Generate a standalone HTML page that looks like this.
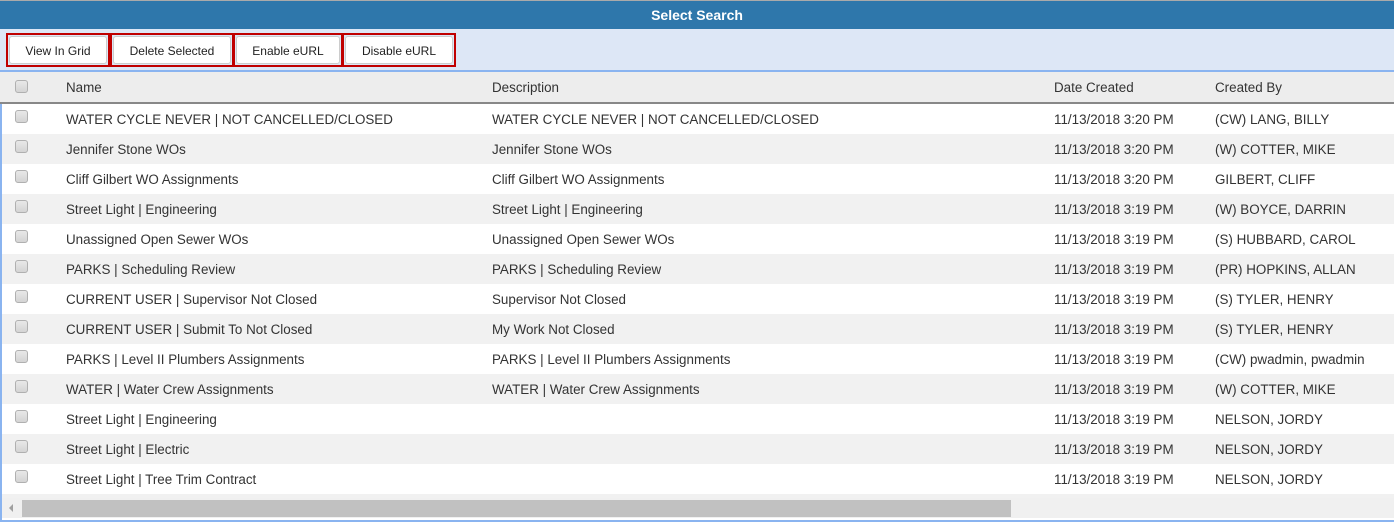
<!DOCTYPE html>
<html><head><style>
*{margin:0;padding:0;box-sizing:border-box}
body{width:1394px;height:522px;background:#fff;font-family:"Liberation Sans",sans-serif;position:relative;overflow:hidden}
.title{position:absolute;left:0;top:0;width:1394px;height:29px;background:#2e77ab;border-top:1px solid #aaa;color:#fff;font-weight:bold;font-size:14px;text-align:center;line-height:28px}
.tb{position:absolute;left:0;top:29px;width:1394px;height:41px;background:#dde7f6}
.btn{position:absolute;top:4px;height:34px;border:2px solid #c00000;padding:1px}
.btn div{width:100%;height:100%;background:#fff;border:1px solid #ccc;border-radius:3px;font-size:12px;color:#222;text-align:center;line-height:28px}
.frame{position:absolute;left:0;top:70px;width:1394px;height:452px;border-top:2px solid #8ab4f0;border-left:2px solid #8ab4f0;border-bottom:2px solid #8ab4f0}
.hdr{position:absolute;left:0;top:72px;width:1394px;height:32px;background:#ededed;border-bottom:2px solid #888}
.row{position:absolute;left:2px;width:1392px;height:30px}
.t{position:absolute;font-size:13.4px;color:#333;white-space:nowrap;line-height:30px;top:1px}
.cb{position:absolute;left:13px;top:6px;width:13px;height:13px;border:1px solid #b0b0b0;border-radius:3px;background:linear-gradient(#e8e8e8,#d4d4d4)}
.sb{position:absolute;left:2px;top:498px;width:1392px;height:20px;background:#f0f0f0}
</style></head><body>
<div class="title">Select Search</div>
<div class="tb">
<div class="btn" style="left:6px;width:104px"><div>View In Grid</div></div>
<div class="btn" style="left:110px;width:124px"><div>Delete Selected</div></div>
<div class="btn" style="left:233px;width:110px"><div>Enable eURL</div></div>
<div class="btn" style="left:342px;width:114px"><div>Disable eURL</div></div>
</div>
<div class="frame"></div>
<div class="hdr"><div class="row" style="top:0;height:30px"><span class="cb" style="top:8px"></span><span class="t" style="left:64px;top:1px">Name</span><span class="t" style="left:490px;top:1px">Description</span><span class="t" style="left:1052px;top:1px">Date Created</span><span class="t" style="left:1213px;top:1px">Created By</span></div></div>

<div class="row" style="top:104px;background:#fff"><span class="cb"></span><span class="t" style="left:64px">WATER CYCLE NEVER | NOT CANCELLED/CLOSED</span><span class="t" style="left:490px">WATER CYCLE NEVER | NOT CANCELLED/CLOSED</span><span class="t" style="left:1052px">11/13/2018 3:20 PM</span><span class="t" style="left:1213px">(CW) LANG, BILLY</span></div>
<div class="row" style="top:134px;background:#f1f1f1"><span class="cb"></span><span class="t" style="left:64px">Jennifer Stone WOs</span><span class="t" style="left:490px">Jennifer Stone WOs</span><span class="t" style="left:1052px">11/13/2018 3:20 PM</span><span class="t" style="left:1213px">(W) COTTER, MIKE</span></div>
<div class="row" style="top:164px;background:#fff"><span class="cb"></span><span class="t" style="left:64px">Cliff Gilbert WO Assignments</span><span class="t" style="left:490px">Cliff Gilbert WO Assignments</span><span class="t" style="left:1052px">11/13/2018 3:20 PM</span><span class="t" style="left:1213px">GILBERT, CLIFF</span></div>
<div class="row" style="top:194px;background:#f1f1f1"><span class="cb"></span><span class="t" style="left:64px">Street Light | Engineering</span><span class="t" style="left:490px">Street Light | Engineering</span><span class="t" style="left:1052px">11/13/2018 3:19 PM</span><span class="t" style="left:1213px">(W) BOYCE, DARRIN</span></div>
<div class="row" style="top:224px;background:#fff"><span class="cb"></span><span class="t" style="left:64px">Unassigned Open Sewer WOs</span><span class="t" style="left:490px">Unassigned Open Sewer WOs</span><span class="t" style="left:1052px">11/13/2018 3:19 PM</span><span class="t" style="left:1213px">(S) HUBBARD, CAROL</span></div>
<div class="row" style="top:254px;background:#f1f1f1"><span class="cb"></span><span class="t" style="left:64px">PARKS | Scheduling Review</span><span class="t" style="left:490px">PARKS | Scheduling Review</span><span class="t" style="left:1052px">11/13/2018 3:19 PM</span><span class="t" style="left:1213px">(PR) HOPKINS, ALLAN</span></div>
<div class="row" style="top:284px;background:#fff"><span class="cb"></span><span class="t" style="left:64px">CURRENT USER | Supervisor Not Closed</span><span class="t" style="left:490px">Supervisor Not Closed</span><span class="t" style="left:1052px">11/13/2018 3:19 PM</span><span class="t" style="left:1213px">(S) TYLER, HENRY</span></div>
<div class="row" style="top:314px;background:#f1f1f1"><span class="cb"></span><span class="t" style="left:64px">CURRENT USER | Submit To Not Closed</span><span class="t" style="left:490px">My Work Not Closed</span><span class="t" style="left:1052px">11/13/2018 3:19 PM</span><span class="t" style="left:1213px">(S) TYLER, HENRY</span></div>
<div class="row" style="top:344px;background:#fff"><span class="cb"></span><span class="t" style="left:64px">PARKS | Level II Plumbers Assignments</span><span class="t" style="left:490px">PARKS | Level II Plumbers Assignments</span><span class="t" style="left:1052px">11/13/2018 3:19 PM</span><span class="t" style="left:1213px">(CW) pwadmin, pwadmin</span></div>
<div class="row" style="top:374px;background:#f1f1f1"><span class="cb"></span><span class="t" style="left:64px">WATER | Water Crew Assignments</span><span class="t" style="left:490px">WATER | Water Crew Assignments</span><span class="t" style="left:1052px">11/13/2018 3:19 PM</span><span class="t" style="left:1213px">(W) COTTER, MIKE</span></div>
<div class="row" style="top:404px;background:#fff"><span class="cb"></span><span class="t" style="left:64px">Street Light | Engineering</span><span class="t" style="left:1052px">11/13/2018 3:19 PM</span><span class="t" style="left:1213px">NELSON, JORDY</span></div>
<div class="row" style="top:434px;background:#f1f1f1"><span class="cb"></span><span class="t" style="left:64px">Street Light | Electric</span><span class="t" style="left:1052px">11/13/2018 3:19 PM</span><span class="t" style="left:1213px">NELSON, JORDY</span></div>
<div class="row" style="top:464px;background:#fff"><span class="cb"></span><span class="t" style="left:64px">Street Light | Tree Trim Contract</span><span class="t" style="left:1052px">11/13/2018 3:19 PM</span><span class="t" style="left:1213px">NELSON, JORDY</span></div>
<div class="row" style="top:494px;height:4px;background:#f1f1f1"></div>
<div class="sb">
<div style="position:absolute;left:7px;top:6px;width:0;height:0;border-top:4px solid transparent;border-bottom:4px solid transparent;border-right:4px solid #a0a0a0"></div>
<div style="position:absolute;left:20px;top:2px;width:989px;height:17px;background:#c1c1c1"></div>
</div>
</body></html>
